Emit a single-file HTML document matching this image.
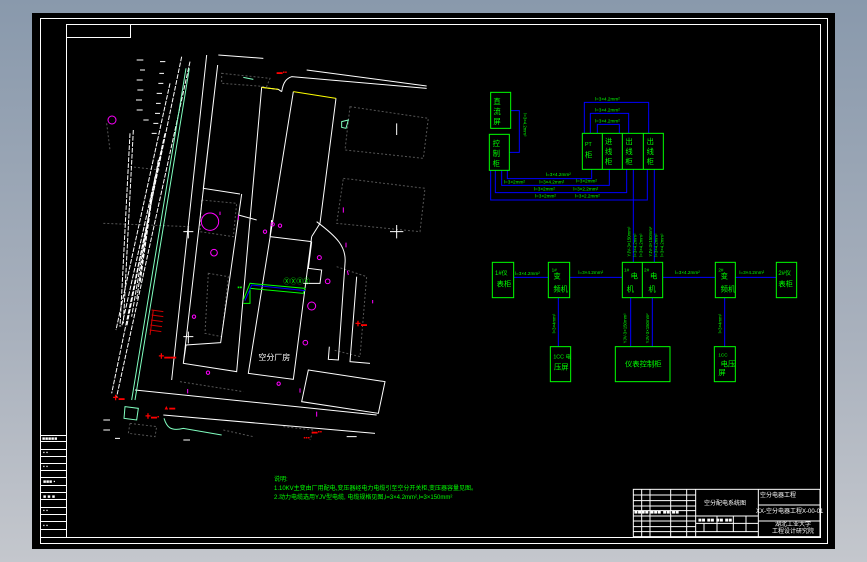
<!DOCTYPE html>
<html><head><meta charset="utf-8"><style>
html,body{margin:0;padding:0;width:867px;height:562px;overflow:hidden;background:linear-gradient(#8999ac,#a9b1bd 60%,#c4c7cd);}
svg{position:absolute;left:0;top:0}
text{font-family:"Liberation Sans","Noto Sans CJK SC",sans-serif}
</style></head><body>
<svg width="867" height="562" viewBox="0 0 867 562">
<rect x="32" y="13" width="803" height="536" fill="#000"/>
<g fill="none" stroke="#fff" stroke-width="1">
<rect x="40.5" y="18.5" width="787" height="525"/>
<rect x="66.5" y="24.5" width="754" height="513"/>
<polyline points="66.5,37.5 130.5,37.5 130.5,24.5"/>
<rect x="40.5" y="435.5" width="26" height="102"/>
<path d="M40 441.5H66M40 449.5H66M40 456.5H66M40 463.5H66M40 470.5H66M40 477.5H66M40 485.5H66M40 492.5H66M40 499.5H66M40 507.5H66M40 514.5H66M40 521.5H66M40 529.5H66"/>
</g>
<g fill="#fff" font-size="5">
<text x="42" y="440">■■■■■</text><text x="43" y="454">▪ ▪</text><text x="43" y="468">▪ ▪</text><text x="43" y="483">■■■ ▪</text><text x="43" y="498">■ ■ ■</text><text x="43" y="512">▪ ▪</text><text x="43" y="527">▪ ▪</text>
</g>
<!-- map -->
<g transform="translate(90,50) scale(0.33333)" fill="none" stroke-width="3">
<g stroke="#555" stroke-dasharray="6,6">
<path d="M780,170 L1015,205 1000,325 765,300Z M760,385 1005,415 990,545 740,520Z M395,70 540,85 530,110 395,100Z M335,450 440,460 430,560 330,545Z M355,670 415,680 395,860 345,850Z M120,350 L210,360 M40,520 300,530 M270,995 460,1025 M580,1130 670,1140 660,1170 M120,1120 200,1130 195,1160 115,1150Z M400,1140 490,1160 M50,220 60,300 M740,650 830,680 810,920 730,900"/>
</g>
<g stroke="#fff">
<path d="M385,15 L520,25 M383,45 L340,415 450,432 M565,118 L515,112 440,965 280,940 288,885 360,880 392,878 455,432 M610,125 L475,970 610,988 665,560 M738,145 L690,520 M540,560 L665,575 M690,520 L665,560 M665,575 L655,655 695,660 690,700 640,700 M575,125 C580,95 590,85 605,80 L1010,115 M565,118 L575,125 M650,60 L1010,108 M680,515 C740,560 770,590 765,640 L745,930 715,928 718,890 M655,960 L885,995 865,1090 635,1055Z M135,1020 L860,1095 M220,1095 L855,1150 M800,680 L780,935 840,940 M350,15 L245,990 M383,45 L280,940 M445,495 L500,510 M540,560 L545,510"/>
<path d="M275,20 L65,1030 M300,35 L80,1040 M240,100 L78,840 M225,250 L95,830 M215,300 L110,830 M205,330 L125,800 M195,380 L150,700 M185,430 L140,750 M130,240 L100,820 M120,250 L90,830" stroke-dasharray="14,4"/>
<path d="M140,30 L160,30 M150,60 L165,60 M140,90 L158,90 M142,120 L160,120 M138,150 L156,150 M140,180 L158,180 M160,210 L176,210 M210,35 L226,35 M208,70 L222,70 M205,100 L220,100 M200,130 L216,130 M198,160 L212,160 M195,190 L210,190 M190,220 L205,220 M185,250 L200,250 M40,1110 L60,1110 M40,1140 L60,1140 M75,1165 L90,1165 M280,1170 L300,1170 M770,1160 L800,1160 M900,545 L940,545 M920,525 L920,565 M280,545 L310,545 M295,530 L295,565 M280,860 L310,860 M295,845 L295,880 M920,220 L920,255"/>
</g>
<g stroke="#80ffc0">
<path d="M298,55 L135,1050 M288,55 L125,1050 M222,1105 C230,1130 240,1145 280,1135 L395,1155 M105,1070 L145,1075 140,1110 102,1105Z M460,82 L490,88 M755,215 L775,210 768,235 755,232Z"/>
</g>
<path d="M515,112 L565,118 M610,125 L738,145" stroke="#ffff00"/>
<path d="M460,750 L480,700 645,715 640,730 480,715 480,760 460,760" stroke="#00ff00"/>
<path d="M465,752 L485,705 645,722" stroke="#0000ff"/>
<g stroke="#ff00ff">
<circle cx="360" cy="515" r="26"/><circle cx="372" cy="608" r="10"/><circle cx="665" cy="768" r="12"/><circle cx="66" cy="210" r="12"/><circle cx="548" cy="523" r="5"/><circle cx="570" cy="527" r="5"/><circle cx="525" cy="545" r="5"/><circle cx="688" cy="623" r="6"/><circle cx="713" cy="694" r="7"/><circle cx="646" cy="878" r="7"/><circle cx="354" cy="968" r="5"/><circle cx="566" cy="1001" r="5"/><circle cx="312" cy="800" r="5"/>
<path d="M760,472 L760,488 M768,578 L768,592 M772,662 L775,675 M848,750 L848,760 M293,1017 L293,1030 M680,1085 L680,1100 M630,1015 L630,1028 M445,495 L445,510 M390,485 L390,495"/>
</g>
<g stroke="#cc0000"><path d="M185,780 L220,785 M185,795 L220,800 M183,810 L218,815 M181,825 L216,830 M179,840 L214,845 M190,780 L180,855"/></g>
<g fill="#ff0000" font-size="18"><text x="560" y="72">▬▪▪</text><text x="205" y="925">✚▬▬</text><text x="795" y="828">✚▬</text><text x="68" y="1050">✚▬</text><text x="220" y="1078">▲▬</text><text x="165" y="1105">✚▬▪</text><text x="665" y="1150">▬▪▪</text><text x="640" y="1168">▪▪▪</text></g>
<g fill="#00ff00" font-size="20"><text x="580" y="700">ⓍⓍⓍⓍ</text><text x="442" y="718">▪▪</text></g>
<text x="505" y="930" fill="#fff" font-size="24">空分厂房</text>
</g>
<!-- diagram -->
<g transform="translate(470,80) scale(0.33333)" fill="none" stroke-width="3">
<g stroke="#0000ff">
<path d="M122,92H148V217H118 M343,160V67H536V160 M361,160V100H476V160 M382,160V133H448V160 M112,271V296H365V268 M95,271V316H418V268 M76,271V338H470V268 M62,271V360H532V268 M490,268V547 M553,268V547 M131,592H235 M299,592H457 M578,592H736 M796,592H919 M265,653V800 M482,653V800 M547,653V800 M764,653V800"/>
</g>
<g stroke="#00ff00">
<rect x="62" y="37" width="60" height="108"/><rect x="58" y="163" width="60" height="108"/>
<rect x="337" y="160" width="243" height="108"/><path d="M397,160V268M457,160V268M520,160V268M517,547V653"/>
<rect x="67" y="547" width="64" height="106"/><rect x="235" y="547" width="64" height="106"/><rect x="457" y="547" width="121" height="106"/><rect x="736" y="547" width="60" height="106"/><rect x="919" y="547" width="61" height="106"/>
<rect x="241" y="800" width="61" height="105"/><rect x="436" y="800" width="164" height="105"/><rect x="733" y="800" width="63" height="105"/>
</g>
<g fill="#00ff00" font-size="22">
<text x="70" y="72">直</text><text x="70" y="102">流</text><text x="70" y="132">屏</text>
<text x="68" y="198">控</text><text x="68" y="228">制</text><text x="68" y="258">柜</text>
<text x="345" y="198" font-size="16">PT</text><text x="345" y="232">柜</text>
<text x="405" y="192">进</text><text x="405" y="222">线</text><text x="405" y="252">柜</text>
<text x="466" y="192">出</text><text x="466" y="222">线</text><text x="466" y="252">柜</text>
<text x="530" y="192">出</text><text x="530" y="222">线</text><text x="530" y="252">柜</text>
<text x="75" y="585" font-size="18">1#仪</text><text x="80" y="620">表柜</text>
<text x="245" y="575" font-size="14">1#</text><text x="250" y="595">变</text><text x="250" y="635">频机</text>
<text x="462" y="575" font-size="14">1#</text><text x="482" y="595">电</text><text x="470" y="635">机</text>
<text x="522" y="575" font-size="14">2#</text><text x="540" y="595">电</text><text x="535" y="635">机</text>
<text x="745" y="575" font-size="14">2#</text><text x="752" y="595">变</text><text x="752" y="635">频机</text>
<text x="925" y="585" font-size="18">2#仪</text><text x="925" y="620">表柜</text>
<text x="250" y="835" font-size="16">1CC 电</text><text x="252" y="868">压屏</text>
<text x="465" y="860">仪表控制柜</text>
<text x="745" y="830" font-size="14">1CC</text><text x="752" y="860">电压</text><text x="745" y="885">屏</text>
</g>
<g fill="#00ff00" font-size="14">
<text x="375" y="62">l=3×4.2mm²</text><text x="375" y="95">l=3×4.2mm²</text><text x="375" y="128">l=3×4.2mm²</text>
<text x="228" y="288">l=3×4.2mm²</text><text x="102" y="310">l=3×2mm²</text><text x="208" y="310">l=3×4.2mm²</text><text x="318" y="308">l=3×2mm²</text>
<text x="192" y="332">l=3×2mm²</text><text x="310" y="332">l=3×2.2mm²</text><text x="195" y="353">l=3×2mm²</text><text x="315" y="353">l=3×2.2mm²</text>
<text x="135" y="585">l=3×4.2mm²</text><text x="325" y="582">l=3×4.2mm²</text><text x="615" y="582">l=3×4.2mm²</text><text x="808" y="582">l=3×4.2mm²</text>
</g>
<g fill="#00ff00" font-size="13">
<text transform="translate(160,100) rotate(90)">l=3×4.2mm²</text>
<text transform="translate(482,530) rotate(-90)">YJV-3×150mm²</text><text transform="translate(500,530) rotate(-90)">l=3×4.2mm²</text><text transform="translate(517,530) rotate(-90)">l=3×4.2mm²</text>
<text transform="translate(546,530) rotate(-90)">YJV-3×150mm²</text><text transform="translate(563,530) rotate(-90)">l=3×4.2mm²</text><text transform="translate(580,530) rotate(-90)">l=3×4.2mm²</text>
<text transform="translate(256,760) rotate(-90)">l=3×4mm²</text><text transform="translate(470,790) rotate(-90)">YJV-3×150mm²</text><text transform="translate(537,790) rotate(-90)">YJV-3×150mm²</text><text transform="translate(755,760) rotate(-90)">l=3×4mm²</text>
</g>
</g>
<!-- notes -->
<g fill="#00ff00" font-size="6">
<text x="274" y="481">说明:</text>
<text x="274" y="490">1.10KV主变由厂用配电,变压器经电力电缆引至空分开关柜,变压器容量见图。</text>
<text x="274" y="499">2.动力电缆选用YJV型电缆,   电缆规格见图,l=3×4.2mm²,l=3×150mm²</text>
</g>
<!-- title block -->
<g transform="translate(620,470) scale(0.33333)" fill="none" stroke="#fff" stroke-width="3">
<rect x="40" y="58" width="560" height="142"/>
<path d="M227,58V200M415,58V200M65,58V200M90,58V200M152,58V200M200,58V200M40,75H227M40,92H227M40,108H227M40,122H227M40,138H415M40,153H227M40,170H227M40,185H415M227,160H415M291,138V185M340,138V185M378,138V185M252,160V185M415,105H600M415,153H600"/>
</g>
<g fill="#fff" font-size="6">
<text x="704" y="505">空分配电系统图</text>
<text x="760" y="497">空分电器工程</text>
<text x="756" y="513">XX-空分电器工程X-00-01</text>
<text x="775" y="526">湖北工业大学</text><text x="772" y="533">工程设计研究院</text>
<text x="634" y="514">■■■■ ■■■ ■■ ■■</text>
<text x="698" y="522">■■ ■■ ■■ ■■</text>
</g>
</svg>
</body></html>
